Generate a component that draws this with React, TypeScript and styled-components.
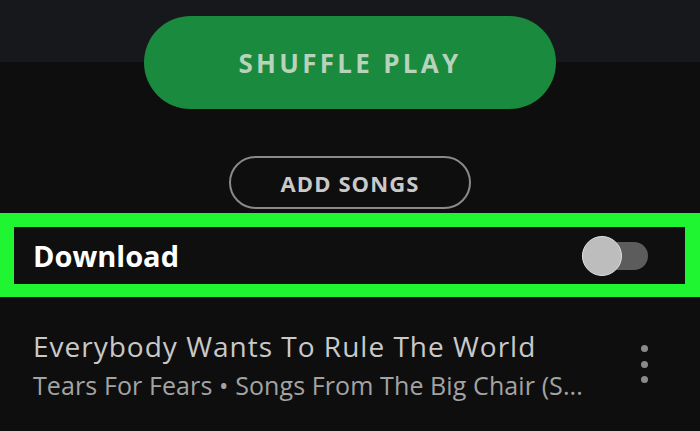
import styled, { createGlobalStyle } from "styled-components";

const GlobalStyle = createGlobalStyle`
  html, body {
    margin: 0;
    padding: 0;
    background: #0e0e0e;
  }
  body {
    font-family: "Open Sans", "Noto Sans", "Liberation Sans", sans-serif;
  }
`;

const Page = styled.div`
  width: 700px;
  height: 431px;
  overflow: hidden;
  box-sizing: border-box;
  padding-top: 16px;
  display: flex;
  flex-direction: column;
  align-items: center;
  background: linear-gradient(
    to bottom,
    #17181c 0px,
    #17181c 62px,
    #0e0e0e 62px
  );
`;

const ShuffleButton = styled.div`
  width: 412px;
  height: 93px;
  border-radius: 47px;
  background: #1a8a3e;
  display: flex;
  align-items: center;
  justify-content: center;
  color: #b7d3bb;
  font-size: 26px;
  font-weight: 700;
  letter-spacing: 3.3px;
`;

const AddSongsButton = styled.div`
  margin-top: 47px;
  width: 242px;
  height: 53px;
  box-sizing: border-box;
  border: 2px solid #8a8a8a;
  border-radius: 27px;
  display: flex;
  align-items: center;
  justify-content: center;
  color: #c9c9c9;
  font-size: 22px;
  font-weight: 700;
  letter-spacing: 1.1px;
`;

const HighlightFrame = styled.div`
  margin-top: 4px;
  align-self: stretch;
  border-style: solid;
  border-color: #1ff530;
  border-width: 14px 15px 13px 14px;
  background: #0f0f0f;
  height: 57px;
  display: flex;
  align-items: center;
  justify-content: space-between;
  padding: 0 37px 0 19px;
`;

const RowLabel = styled.span`
  color: #ffffff;
  font-size: 29px;
  font-weight: 700;
`;

const Toggle = styled.div`
  position: relative;
  width: 66px;
  height: 28px;
  border-radius: 14px;
  background: #5c5c5c;
`;

const Knob = styled.div`
  position: absolute;
  left: 0;
  top: -6px;
  width: 40px;
  height: 40px;
  box-sizing: border-box;
  border-radius: 50%;
  background: #bdbdbd;
  border: 1.5px solid #e0e0e0;
`;

const SongRow = styled.div`
  align-self: stretch;
  display: flex;
  align-items: flex-start;
  justify-content: space-between;
  padding: 31px 52px 0 33px;
`;

const SongInfo = styled.div`
  display: flex;
  flex-direction: column;
`;

const SongTitle = styled.span`
  color: #c9c9c9;
  font-size: 28px;
  line-height: 36px;
  letter-spacing: 1px;
`;

const SongMeta = styled.span`
  color: #a3a3a3;
  font-size: 25px;
  line-height: 30px;
  margin-top: 6px;
  letter-spacing: 0.1px;
`;

const MoreMenu = styled.div`
  display: flex;
  flex-direction: column;
  gap: 8.5px;
  padding-top: 17px;
`;

const Dot = styled.span`
  width: 7px;
  height: 7px;
  border-radius: 50%;
  background: #8a8a8a;
`;

export default function App() {
  return (
    <>
      <GlobalStyle />
      <Page>
        <ShuffleButton>SHUFFLE PLAY</ShuffleButton>
        <AddSongsButton>ADD SONGS</AddSongsButton>
        <HighlightFrame>
          <RowLabel>Download</RowLabel>
          <Toggle>
            <Knob />
          </Toggle>
        </HighlightFrame>
        <SongRow>
          <SongInfo>
            <SongTitle>Everybody Wants To Rule The World</SongTitle>
            <SongMeta>Tears For Fears • Songs From The Big Chair (S...</SongMeta>
          </SongInfo>
          <MoreMenu>
            <Dot />
            <Dot />
            <Dot />
          </MoreMenu>
        </SongRow>
      </Page>
    </>
  );
}
